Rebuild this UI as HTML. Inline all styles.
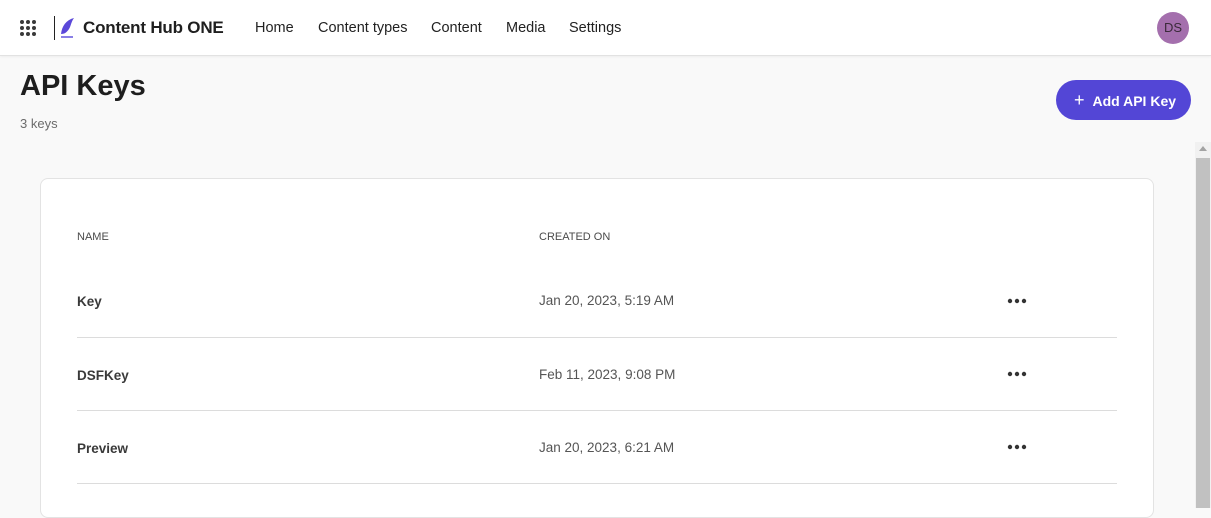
<!DOCTYPE html>
<html><head><meta charset="utf-8"><style>
*{margin:0;padding:0;box-sizing:border-box}
body{width:1211px;height:508px;overflow:hidden;background:#f9f9f9;font-family:"Liberation Sans",sans-serif;color:#1f1f1f;position:relative}
.top{position:absolute;left:0;top:0;width:1211px;height:56px;background:#fff;border-bottom:1px solid #e2e2e2;box-shadow:0 1px 2px rgba(0,0,0,.05)}
.grid{position:absolute;left:20px;top:20px;width:16px;height:16px}
.grid i{position:absolute;width:4px;height:4px;border-radius:50%;background:#3a3a3a}
.bar{position:absolute;left:54px;top:16px;width:1px;height:24px;background:#222}
.brand{position:absolute;left:83px;top:18px;font-size:17px;font-weight:bold;letter-spacing:-.2px}
.nav{position:absolute;top:20px;font-size:14.5px;color:#222}
.av{position:absolute;left:1157px;top:12px;width:32px;height:32px;border-radius:50%;background:#a46fad;color:#3a2a3a;font-size:13px;text-align:center;line-height:32px}
h1{position:absolute;left:20px;top:70px;font-size:29px;font-weight:bold;color:#1e1e1e}
.sub{position:absolute;left:20px;top:116px;font-size:13px;color:#6b6b6b}
.btn{position:absolute;left:1056px;top:80px;width:135px;height:40px;border-radius:20px;background:#5346d6;color:#fff;font-size:14px;font-weight:bold;line-height:40px;padding-left:18px}
.card{position:absolute;left:40px;top:178px;width:1114px;height:340px;background:#fff;border:1px solid #e3e3e3;border-radius:8px}
.th{position:absolute;top:231px;font-size:11px;color:#4a4a4a}
.nm{position:absolute;left:77px;font-size:13.5px;font-weight:bold;color:#3a3a3a}
.dt{position:absolute;left:539px;font-size:13.5px;color:#555}
.dots{position:absolute;left:1007px}
.ln{position:absolute;left:77px;width:1040px;height:1px;background:#dcdcdc}
.sb{position:absolute;left:1195px;top:142px;width:16px;height:366px;background:#f1f1f1}
.th2{position:absolute;left:1196px;top:158px;width:14px;height:350px;background:#c1c1c1}
</style></head><body>
<div class="top">
<div class="grid"><i style="left:0;top:0"></i><i style="left:6px;top:0"></i><i style="left:12px;top:0"></i><i style="left:0;top:6px"></i><i style="left:6px;top:6px"></i><i style="left:12px;top:6px"></i><i style="left:0;top:12px"></i><i style="left:6px;top:12px"></i><i style="left:12px;top:12px"></i></div>
<div class="bar"></div>
<svg style="position:absolute;left:58px;top:16px" width="18" height="24" viewBox="0 0 18 24"><path d="M3 18 C4 10 8 4 16 2 C13 6 13 10 11 13 C9 16 7 18 3 18Z" fill="#5b48d9"/><rect x="3" y="20" width="12" height="2" fill="#8a7fe6"/></svg>
<div class="brand">Content Hub ONE</div>
<div class="nav" style="left:255px">Home</div>
<div class="nav" style="left:318px">Content types</div>
<div class="nav" style="left:431px">Content</div>
<div class="nav" style="left:506px">Media</div>
<div class="nav" style="left:569px">Settings</div>
<div class="av">DS</div>
</div>
<h1>API Keys</h1>
<div class="sub">3 keys</div>
<div class="btn"><span style="font-weight:normal;font-size:18px;margin-right:8px">+</span>Add API Key</div>
<div class="card"></div>
<div class="th" style="left:77px">NAME</div>
<div class="th" style="left:539px">CREATED ON</div>
<div class="nm" style="top:294px">Key</div><div class="dt" style="top:293px">Jan 20, 2023, 5:19 AM</div>
<svg class="dots" style="top:297px" width="20" height="8"><circle cx="3" cy="4" r="2.2" fill="#333"/><circle cx="10" cy="4" r="2.2" fill="#333"/><circle cx="17" cy="4" r="2.2" fill="#333"/></svg>
<div class="ln" style="top:337px"></div>
<div class="nm" style="top:368px">DSFKey</div><div class="dt" style="top:367px">Feb 11, 2023, 9:08 PM</div>
<svg class="dots" style="top:370px" width="20" height="8"><circle cx="3" cy="4" r="2.2" fill="#333"/><circle cx="10" cy="4" r="2.2" fill="#333"/><circle cx="17" cy="4" r="2.2" fill="#333"/></svg>
<div class="ln" style="top:410px"></div>
<div class="nm" style="top:441px">Preview</div><div class="dt" style="top:440px">Jan 20, 2023, 6:21 AM</div>
<svg class="dots" style="top:443px" width="20" height="8"><circle cx="3" cy="4" r="2.2" fill="#333"/><circle cx="10" cy="4" r="2.2" fill="#333"/><circle cx="17" cy="4" r="2.2" fill="#333"/></svg>
<div class="ln" style="top:483px"></div>
<div class="sb"></div><div class="th2"></div>
<div style="position:absolute;left:1199px;top:146px;width:0;height:0;border-left:4px solid transparent;border-right:4px solid transparent;border-bottom:5px solid #a3a3a3"></div>
</body></html>
